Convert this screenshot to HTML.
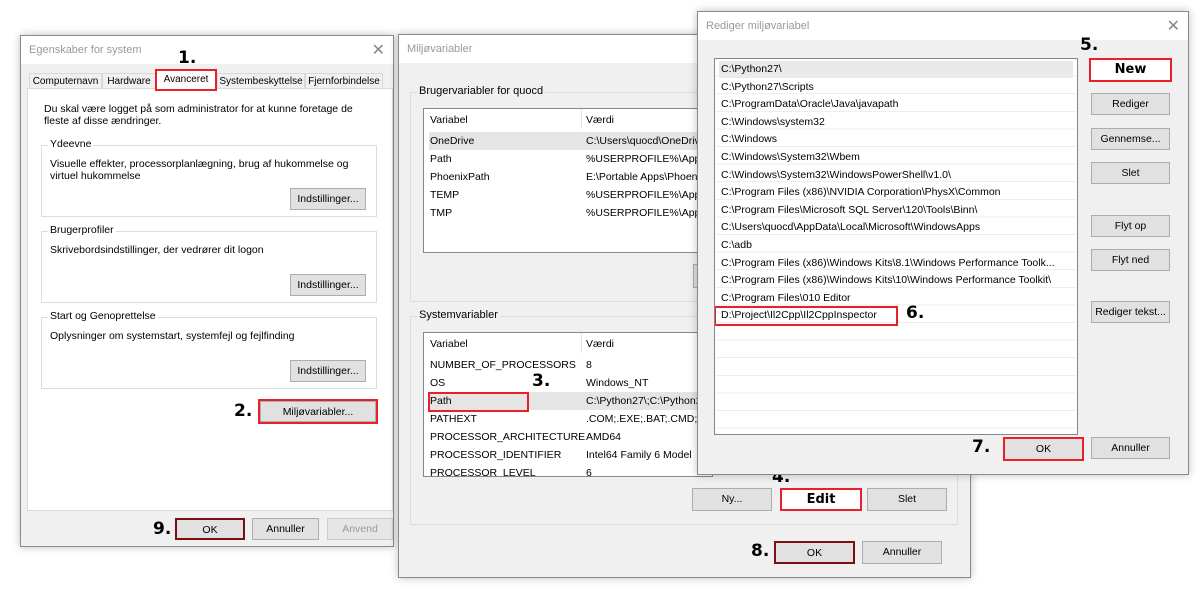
<!DOCTYPE html>
<html><head><meta charset="utf-8"><style>
*{box-sizing:border-box;margin:0;padding:0}
body{width:1200px;height:595px;background:#fff;position:relative;overflow:hidden;font-family:"Liberation Sans",sans-serif;font-size:10.5px;color:#000}
.a{position:absolute}
.dlg{position:absolute;background:#f0f0f0;border:1px solid #8a8a8a;box-shadow:0 0 8px rgba(0,0,0,.25)}
.tb{position:absolute;left:0;top:0;right:0;height:28px;background:#fff;color:#999;font-size:11px;padding:8px 0 0 8px}
.x{position:absolute;right:8px;top:4px;color:#888;font-size:16px}
.btn{position:absolute;background:#e1e1e1;border:1px solid #adadad;text-align:center;font-size:10.5px;line-height:20px}
.red{border:2px solid #e8202a;background:#fff}
.dred{border:2px solid #7a1010}
.grp{position:absolute;border:1px solid #dcdcdc}
.grp>span{position:absolute;top:-8px;left:6px;background:inherit;padding:0 2px}
.num{position:absolute;font-weight:bold;font-size:17px;font-family:"DejaVu Sans",sans-serif}
.list{position:absolute;background:#fff;border:1px solid #828790;overflow:hidden}
.row{position:absolute;left:6px;height:18px;line-height:18px;white-space:nowrap}
.tab{position:absolute;top:37px;height:16px;border:1px solid #d9d9d9;background:#f0f0f0;padding:2px 0;text-align:center;font-size:10px;white-space:nowrap;overflow:hidden}
</style></head><body>

<!-- Dialog 1 -->
<div class="dlg" style="left:20px;top:35px;width:374px;height:512px">
 <div class="tb">Egenskaber for system<span class="x">✕</span></div>
 <div class="a" style="left:6px;top:52px;width:366px;height:423px;background:#fff;border:1px solid #d9d9d9"></div>
 <div class="tab" style="left:8px;width:73px">Computernavn</div>
 <div class="tab" style="left:81px;width:54px">Hardware</div>
 <div class="a" style="left:134px;top:33px;height:22px;width:62px;border:2px solid #e8202a;background:#fff;padding:3px 0;text-align:center;font-size:10px">Avanceret</div>
 <div class="tab" style="left:196px;width:88px">Systembeskyttelse</div>
 <div class="tab" style="left:284px;width:78px">Fjernforbindelse</div>
 <div class="num" style="left:157px;top:12px">1.</div>
 <div class="a" style="left:23px;top:67px;width:325px;line-height:12px">Du skal være logget på som administrator for at kunne foretage de fleste af disse ændringer.</div>
 <div class="grp" style="left:20px;top:109px;width:336px;height:72px;background:#fff"><span>Ydeevne</span>
  <div class="a" style="left:8px;top:12px;width:312px;line-height:12px">Visuelle effekter, processorplanlægning, brug af hukommelse og virtuel hukommelse</div>
  <div class="btn" style="left:248px;top:42px;width:76px;height:22px">Indstillinger...</div></div>
 <div class="grp" style="left:20px;top:195px;width:336px;height:72px;background:#fff"><span>Brugerprofiler</span>
  <div class="a" style="left:8px;top:12px">Skrivebordsindstillinger, der vedrører dit logon</div>
  <div class="btn" style="left:248px;top:42px;width:76px;height:22px">Indstillinger...</div></div>
 <div class="grp" style="left:20px;top:281px;width:336px;height:72px;background:#fff"><span>Start og Genoprettelse</span>
  <div class="a" style="left:8px;top:12px">Oplysninger om systemstart, systemfejl og fejlfinding</div>
  <div class="btn" style="left:248px;top:42px;width:76px;height:22px">Indstillinger...</div></div>
 <div class="num" style="left:213px;top:365px">2.</div>
 <div class="a" style="left:237px;top:363px;width:120px;height:25px;border:2px solid #e8202a;background:#fff"></div>
 <div class="btn" style="left:239px;top:365px;width:116px;height:21px">Miljøvariabler...</div>
 <div class="num" style="left:132px;top:483px">9.</div>
 <div class="btn dred" style="left:154px;top:482px;width:70px;height:22px">OK</div>
 <div class="btn" style="left:231px;top:482px;width:67px;height:22px">Annuller</div>
 <div class="btn" style="left:306px;top:482px;width:66px;height:22px;color:#999;border-color:#ccc;background:#e6e6e6">Anvend</div>
</div>

<!-- Dialog 2 -->
<div class="dlg" style="left:398px;top:34px;width:573px;height:544px">
 <div class="tb">Miljøvariabler</div>
 <div class="grp" style="left:11px;top:57px;width:560px;height:210px;background:#f0f0f0"><span style="font-size:11px">Brugervariabler for quocd</span></div>
 <div class="list" style="left:24px;top:73px;width:290px;height:145px">
  <div class="a" style="left:157px;top:0;width:1px;height:20px;background:#e5e5e5"></div>
  <div class="row" style="top:2px">Variabel</div><div class="row" style="top:2px;left:162px">Værdi</div>
  <div class="a" style="left:5px;top:23px;right:0;height:18px;background:#e5e5e5"></div>
  <div class="row" style="top:23px">OneDrive</div><div class="row" style="top:23px;left:162px">C:\Users\quocd\OneDrive</div>
  <div class="row" style="top:41px">Path</div><div class="row" style="top:41px;left:162px">%USERPROFILE%\AppData</div>
  <div class="row" style="top:59px">PhoenixPath</div><div class="row" style="top:59px;left:162px">E:\Portable Apps\Phoenix</div>
  <div class="row" style="top:77px">TEMP</div><div class="row" style="top:77px;left:162px">%USERPROFILE%\AppData</div>
  <div class="row" style="top:95px">TMP</div><div class="row" style="top:95px;left:162px">%USERPROFILE%\AppData</div>
 </div>
 <div class="btn" style="left:294px;top:229px;width:30px;height:24px"></div>
 <div class="grp" style="left:11px;top:281px;width:548px;height:209px;background:#f0f0f0"><span style="font-size:11px">Systemvariabler</span></div>
 <div class="list" style="left:24px;top:297px;width:290px;height:145px">
  <div class="a" style="left:157px;top:0;width:1px;height:20px;background:#e5e5e5"></div>
  <div class="row" style="top:2px">Variabel</div><div class="row" style="top:2px;left:162px">Værdi</div>
  <div class="row" style="top:23px">NUMBER_OF_PROCESSORS</div><div class="row" style="top:23px;left:162px">8</div>
  <div class="row" style="top:41px">OS</div><div class="row" style="top:41px;left:162px">Windows_NT</div>
  <div class="a" style="left:5px;top:59px;right:0;height:18px;background:#e5e5e5"></div>
  <div class="a" style="left:4px;top:59px;width:101px;height:20px;border:2px solid #e8202a"></div>
  <div class="row" style="top:59px">Path</div><div class="row" style="top:59px;left:162px">C:\Python27\;C:\Python27</div>
  <div class="row" style="top:77px">PATHEXT</div><div class="row" style="top:77px;left:162px">.COM;.EXE;.BAT;.CMD;.VBS</div>
  <div class="row" style="top:95px">PROCESSOR_ARCHITECTURE</div><div class="row" style="top:95px;left:162px">AMD64</div>
  <div class="row" style="top:113px">PROCESSOR_IDENTIFIER</div><div class="row" style="top:113px;left:162px">Intel64 Family 6 Model</div>
  <div class="row" style="top:131px">PROCESSOR_LEVEL</div><div class="row" style="top:131px;left:162px">6</div>
 </div>
 <div class="num" style="left:133px;top:336px">3.</div>
 <div class="num" style="left:373px;top:432px">4.</div>
 <div class="btn" style="left:293px;top:453px;width:80px;height:23px">Ny...</div>
 <div class="btn red" style="left:381px;top:453px;width:82px;height:23px;font-weight:bold;font-size:13px;font-family:'DejaVu Sans',sans-serif">Edit</div>
 <div class="btn" style="left:468px;top:453px;width:80px;height:23px">Slet</div>
 <div class="num" style="left:352px;top:506px">8.</div>
 <div class="btn dred" style="left:375px;top:506px;width:81px;height:23px">OK</div>
 <div class="btn" style="left:463px;top:506px;width:80px;height:23px">Annuller</div>
</div>

<!-- Dialog 3 -->
<div class="dlg" style="left:697px;top:11px;width:492px;height:464px">
 <div class="tb">Rediger miljøvariabel<span class="x">✕</span></div>
 <div class="list" style="left:16px;top:46px;width:364px;height:377px">
  <div class="a" style="left:4px;top:2px;width:354px;height:17px;background:#e9e9e9"></div>
  <div class="a" style="left:0;top:0;width:100%;height:374px;background:repeating-linear-gradient(#0000 0 16.6px,#eee 16.6px 17.6px)"></div>
  <div class="a" style="left:6px;top:2px;line-height:17.6px;font-size:10.5px;white-space:nowrap">C:\Python27\<br>C:\Python27\Scripts<br>C:\ProgramData\Oracle\Java\javapath<br>C:\Windows\system32<br>C:\Windows<br>C:\Windows\System32\Wbem<br>C:\Windows\System32\WindowsPowerShell\v1.0\<br>C:\Program Files (x86)\NVIDIA Corporation\PhysX\Common<br>C:\Program Files\Microsoft SQL Server\120\Tools\Binn\<br>C:\Users\quocd\AppData\Local\Microsoft\WindowsApps<br>C:\adb<br>C:\Program Files (x86)\Windows Kits\8.1\Windows Performance Toolk...<br>C:\Program Files (x86)\Windows Kits\10\Windows Performance Toolkit\<br>C:\Program Files\010 Editor<br>D:\Project\Il2Cpp\Il2CppInspector</div>
  <div class="a" style="left:-1px;top:247px;width:184px;height:20px;border:2px solid #e8202a"></div>
 </div>
 <div class="num" style="left:208px;top:291px">6.</div>
 <div class="num" style="left:382px;top:23px">5.</div>
 <div class="btn red" style="left:391px;top:46px;width:83px;height:24px;font-weight:bold;font-size:13px;font-family:'DejaVu Sans',sans-serif">New</div>
 <div class="btn" style="left:393px;top:81px;width:79px;height:22px">Rediger</div>
 <div class="btn" style="left:393px;top:116px;width:79px;height:22px">Gennemse...</div>
 <div class="btn" style="left:393px;top:150px;width:79px;height:22px">Slet</div>
 <div class="btn" style="left:393px;top:203px;width:79px;height:22px">Flyt op</div>
 <div class="btn" style="left:393px;top:237px;width:79px;height:22px">Flyt ned</div>
 <div class="btn" style="left:393px;top:289px;width:79px;height:22px">Rediger tekst...</div>
 <div class="num" style="left:274px;top:425px">7.</div>
 <div class="btn red" style="left:305px;top:425px;width:81px;height:24px;background:#e1e1e1">OK</div>
 <div class="btn" style="left:393px;top:425px;width:79px;height:22px">Annuller</div>
</div>
</body></html>
